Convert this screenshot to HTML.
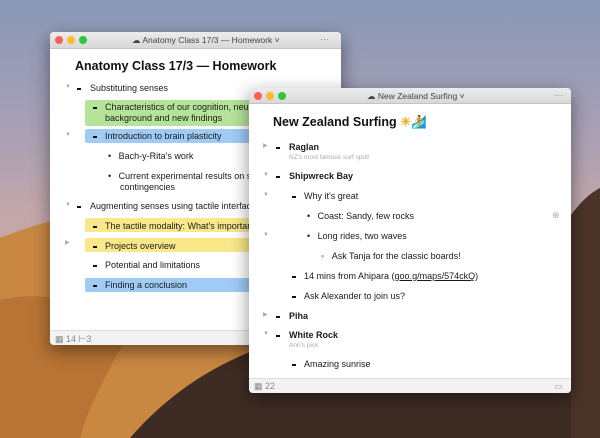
<!DOCTYPE html><html><head><style>
body{margin:0;width:600px;height:438px;overflow:hidden;position:relative;font-family:"Liberation Sans",sans-serif;}
.t{position:absolute;white-space:nowrap;font-size:9px;color:#1a1a1a;line-height:1}
.b{font-weight:bold}
.d{position:absolute;width:4px;height:2px;background:#111}
.w{position:absolute;background:#fff;border-radius:4px;box-shadow:0 6px 18px rgba(0,0,0,.45);overflow:hidden}
.tb{position:absolute;left:0;right:0;top:0;height:16px;background:linear-gradient(#ececec,#d8d8d8);border-bottom:1px solid #c4c4c4}
.dot{position:absolute;top:4px;width:8px;height:8px;border-radius:50%}
.ft{position:absolute;left:0;right:0;bottom:0;height:14px;background:#f3f3f3;border-top:1px solid #ddd}
.hl{position:absolute;border-radius:2px}
.g{color:#aaa}
</style></head><body>
<svg width="600" height="438" style="position:absolute;left:0;top:0">
<defs><linearGradient id="sky" x1="0" y1="0" x2="0" y2="1"><stop offset="0" stop-color="#8a98b8"/><stop offset=".3" stop-color="#a8a0b4"/><stop offset=".5" stop-color="#c4a8a8"/><stop offset="1" stop-color="#b89088"/></linearGradient></defs>
<rect width="600" height="438" fill="url(#sky)"/>
<rect x="0" y="330" width="600" height="108" fill="#3e2c24"/>
<path d="M0 238 C30 226 60 216 110 214 L340 214 L340 330 C250 340 180 380 130 438 L0 438Z" fill="#c98842"/>
<path d="M0 300 C40 290 90 300 130 330 C110 370 90 400 80 438 L0 438Z" fill="#b87434"/>
<path d="M571 215 C582 200 592 192 600 188 L600 438 L571 438Z" fill="#4a342a"/>
</svg>
<div class="w" style="left:50px;top:32px;width:291px;height:313px">
<div class="tb"></div>
<div class="dot" style="left:5px;background:#fc5f57"></div><div class="dot" style="left:17px;background:#fdbc2e"></div><div class="dot" style="left:29px;background:#29c840"></div>
<div class="t" style="left:82px;top:4px;color:#444;font-size:8.5px">☁ Anatomy Class 17/3 — Homework ˅</div>
<div class="t" style="left:270px;top:3px;color:#888">···</div>
<div class="t b" style="left:25px;top:28px;font-size:12.5px;color:#111">Anatomy Class 17/3 — Homework</div>
<div class="t g" style="left:15px;top:52px;font-size:6px">▼</div><div class="d" style="left:27px;top:56px"></div><div class="t" style="left:40px;top:52px">Substituting senses</div>
<div class="hl" style="left:35px;top:68px;width:260px;height:26px;background:#b5e39a"></div>
<div class="d" style="left:43px;top:75px"></div><div class="t" style="left:55px;top:71px">Characteristics of our cognition, neurol</div><div class="t" style="left:55px;top:82px">background and new findings</div>
<div class="hl" style="left:35px;top:97px;width:260px;height:14px;background:#9fcbf5"></div>
<div class="t g" style="left:15px;top:100px;font-size:6px">▼</div><div class="d" style="left:43px;top:104px"></div><div class="t" style="left:55px;top:100px">Introduction to brain plasticity</div>
<div class="t" style="left:58px;top:120px">•&nbsp;&nbsp;&nbsp;Bach-y-Rita's work</div>
<div class="t" style="left:58px;top:140px">•&nbsp;&nbsp;&nbsp;Current experimental results on se</div><div class="t" style="left:70px;top:151px">contingencies</div>
<div class="t g" style="left:15px;top:170px;font-size:6px">▼</div><div class="d" style="left:27px;top:174px"></div><div class="t" style="left:40px;top:170px">Augmenting senses using tactile interfaces</div>
<div class="hl" style="left:35px;top:186px;width:260px;height:14px;background:#f8e88a"></div>
<div class="d" style="left:43px;top:194px"></div><div class="t" style="left:55px;top:190px">The tactile modality: What's important</div>
<div class="hl" style="left:35px;top:206px;width:260px;height:14px;background:#f8e88a"></div>
<div class="t g" style="left:15px;top:208px;font-size:6px">▶</div><div class="d" style="left:43px;top:214px"></div><div class="t" style="left:55px;top:210px">Projects overview</div>
<div class="d" style="left:43px;top:233px"></div><div class="t" style="left:55px;top:229px">Potential and limitations</div>
<div class="hl" style="left:35px;top:246px;width:260px;height:14px;background:#9fcbf5"></div>
<div class="d" style="left:43px;top:253px"></div><div class="t" style="left:55px;top:249px">Finding a conclusion</div>
<div class="ft"></div><div class="t g" style="left:5px;top:303px;color:#888">▦ 14 ⊢3</div>
</div>
<div class="w" style="left:249px;top:88px;width:322px;height:305px">
<div class="tb" style="height:15px"></div>
<div class="dot" style="left:5px;background:#fc5f57"></div><div class="dot" style="left:17px;background:#fdbc2e"></div><div class="dot" style="left:29px;background:#29c840"></div>
<div class="t" style="left:118px;top:4px;color:#444;font-size:8.5px">☁ New Zealand Surfing ˅</div>
<div class="t" style="left:305px;top:3px;color:#888">···</div>
<div class="t b" style="left:24px;top:28px;font-size:12.5px;color:#111">New Zealand Surfing <span style="color:#f0b020">☀</span><span style="color:#2a9a50">🏄</span></div>
<div class="t g" style="left:14px;top:55px;font-size:6px">▶</div><div class="d" style="left:27px;top:59px"></div><div class="t b" style="left:40px;top:55px">Raglan</div>
<div class="t g" style="left:40px;top:67px;font-size:6.5px">NZ's most famous surf spot!</div>
<div class="t g" style="left:14px;top:84px;font-size:6px">▼</div><div class="d" style="left:27px;top:88px"></div><div class="t b" style="left:40px;top:84px">Shipwreck Bay</div>
<div class="t g" style="left:14px;top:104px;font-size:6px">▼</div><div class="d" style="left:43px;top:108px"></div><div class="t" style="left:55px;top:104px">Why it's great</div>
<div class="t" style="left:58px;top:124px">•&nbsp;&nbsp;&nbsp;Coast: Sandy, few rocks</div><div class="t g" style="left:303px;top:123px">⊕</div>
<div class="t g" style="left:14px;top:144px;font-size:6px">▼</div><div class="t" style="left:58px;top:144px">•&nbsp;&nbsp;&nbsp;Long rides, two waves</div>
<div class="t" style="left:72px;top:164px">◦&nbsp;&nbsp;&nbsp;Ask Tanja for the classic boards!</div>
<div class="d" style="left:43px;top:188px"></div><div class="t" style="left:55px;top:184px">14 mins from Ahipara (<u>goo.g/maps/574ckQ</u>)</div>
<div class="d" style="left:43px;top:208px"></div><div class="t" style="left:55px;top:204px">Ask Alexander to join us?</div>
<div class="t g" style="left:14px;top:224px;font-size:6px">▶</div><div class="d" style="left:27px;top:228px"></div><div class="t b" style="left:40px;top:224px">Piha</div>
<div class="t g" style="left:14px;top:243px;font-size:6px">▼</div><div class="d" style="left:27px;top:247px"></div><div class="t b" style="left:40px;top:243px">White Rock</div>
<div class="t g" style="left:40px;top:255px;font-size:6.5px">Ann's pick</div>
<div class="d" style="left:43px;top:276px"></div><div class="t" style="left:55px;top:272px">Amazing sunrise</div>
<div class="ft"></div><div class="t g" style="left:5px;top:294px;color:#888">▦ 22</div><div class="t g" style="left:305px;top:294px">▭</div>
</div>
</body></html>
